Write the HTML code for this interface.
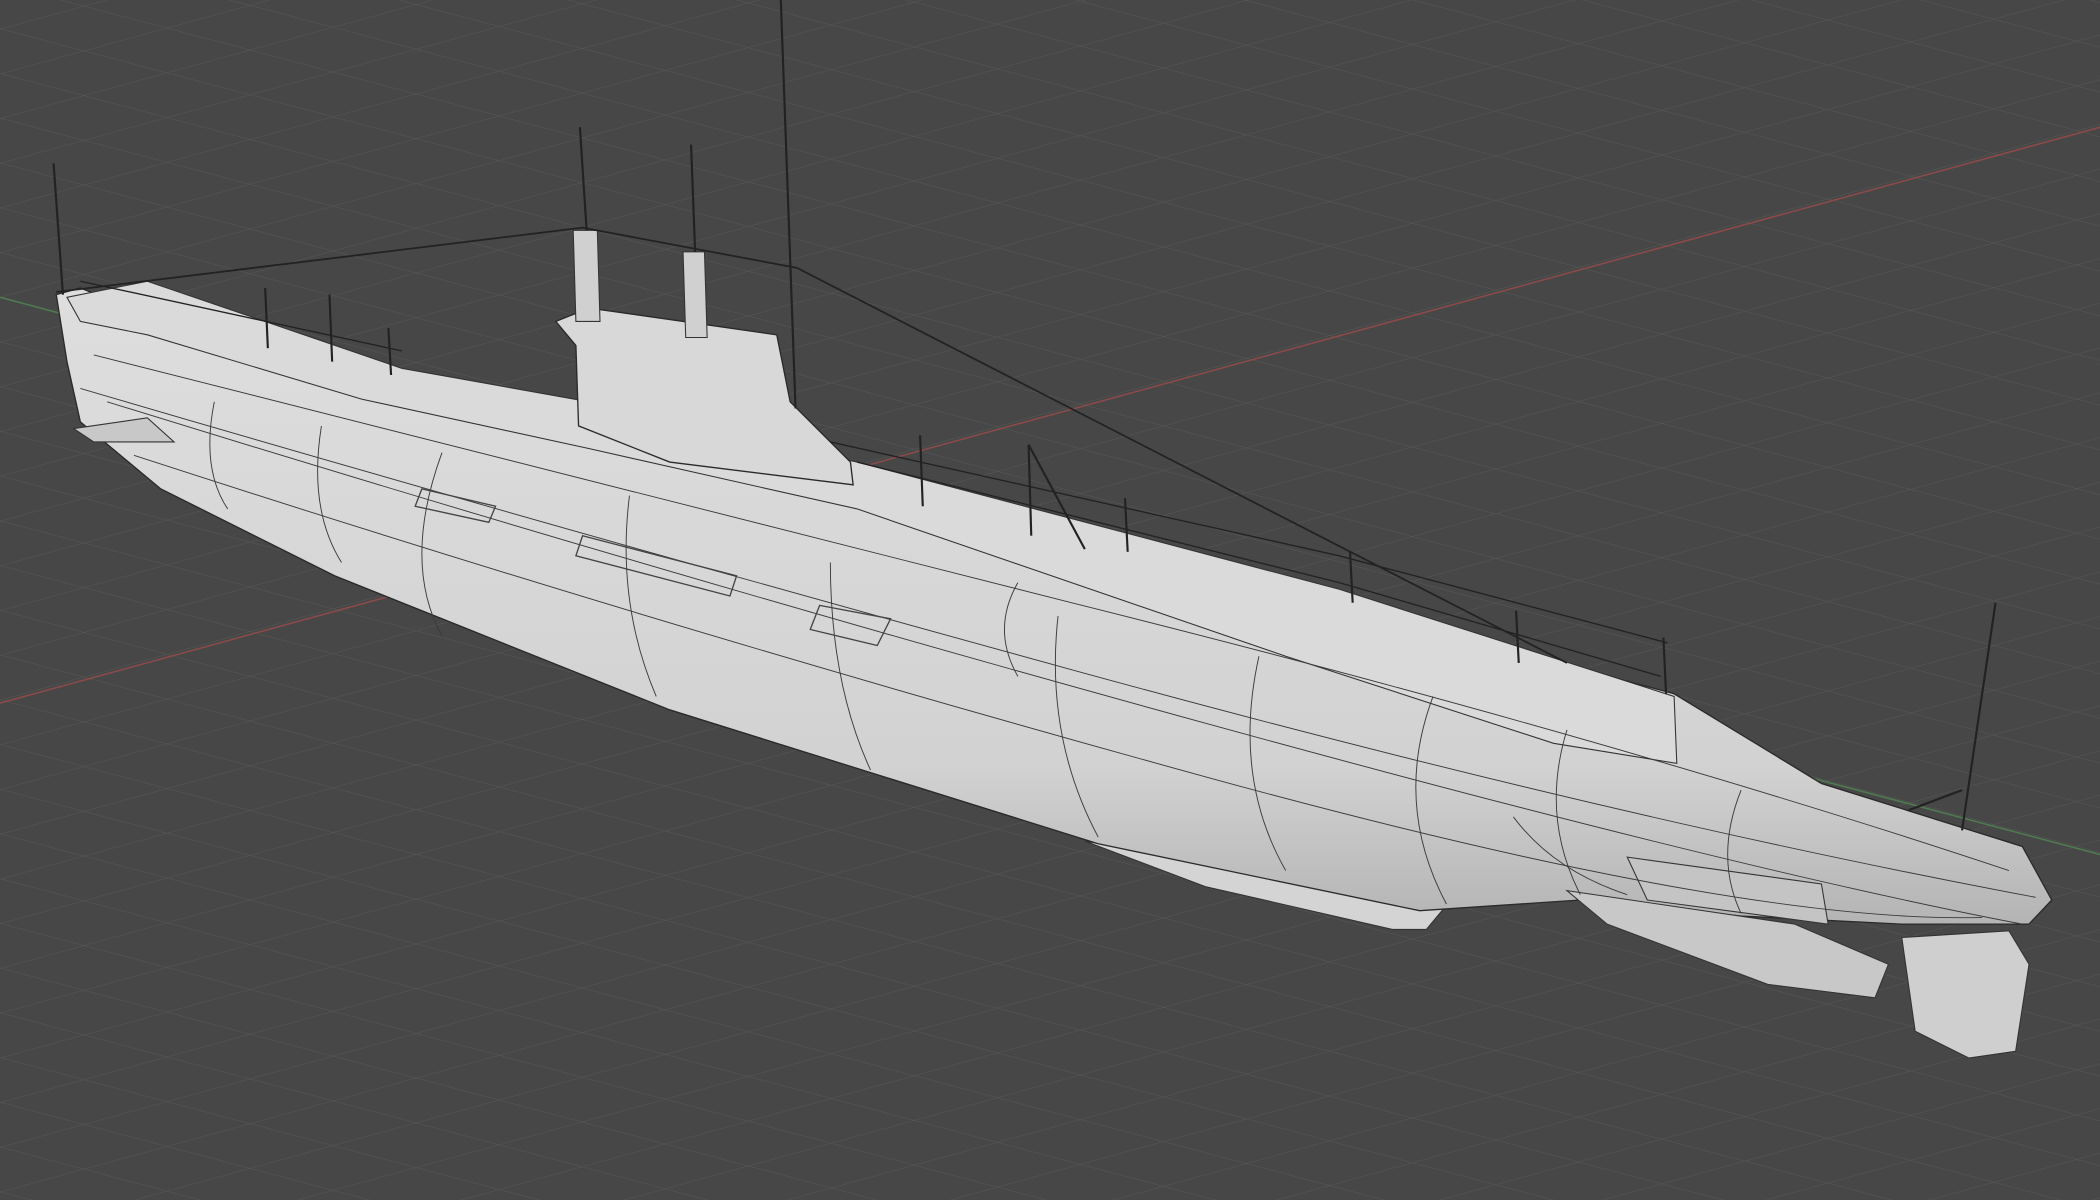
<!DOCTYPE html>
<html><head><meta charset="utf-8"><style>html,body{margin:0;padding:0;background:#474747;overflow:hidden}svg{display:block}</style></head>
<body>
<svg width="2100" height="1200" viewBox="0 0 1568 896" xmlns="http://www.w3.org/2000/svg">
<defs>
<pattern id="g" width="100" height="100" patternUnits="userSpaceOnUse" patternTransform="matrix(0.62,0.164,0.62,-0.17,0,222)">
<path d="M0 0H100M0 0V100" stroke="#575757" stroke-width="2.2" fill="none"/>
</pattern>
<linearGradient id="h" x1="0" y1="0" x2="0" y2="1">
<stop offset="0" stop-color="#dedede"/><stop offset="0.75" stop-color="#d2d2d2"/><stop offset="1" stop-color="#b4b4b4"/>
</linearGradient>
</defs>
<rect width="1568" height="896" fill="#474747"/>
<rect width="1568" height="896" fill="url(#g)"/>
<line x1="0" y1="525" x2="1568" y2="95" stroke="#8a4a4a" stroke-width="1.2"/>
<line x1="0" y1="222" x2="1568" y2="638" stroke="#4f7a4f" stroke-width="1.2"/>
<polygon points="810,628 1080,676 1065,694 1040,694 900,662" fill="#d4d4d4" stroke="#333" stroke-width="0.8"/>
<polygon points="42,220 60,215 110,235 300,290 440,322 640,362 960,440 1250,518 1360,585 1510,632 1532,672 1515,690 1420,690 1300,684 1180,672 1060,680 820,630 500,530 250,430 120,365 60,315 50,270" fill="url(#h)" stroke="#2a2a2a" stroke-width="1"/>
<polygon points="50,222 110,210 300,275 440,300 640,345 1000,440 1250,520 1252,570 1160,555 960,490 640,380 440,335 270,298 110,250 60,240" fill="#dadada" stroke="#333" stroke-width="0.8"/>
<polygon points="415,240 440,230 580,250 590,300 635,345 637,362 500,345 432,318 430,258" fill="#d8d8d8" stroke="#2a2a2a" stroke-width="1"/>
<polygon points="428,172 446,172 448,240 430,240" fill="#d0d0d0" stroke="#333" stroke-width="0.8"/>
<polygon points="510,188 526,188 528,252 512,252" fill="#d0d0d0" stroke="#333" stroke-width="0.8"/>
<polygon points="1420,700 1500,695 1515,720 1505,785 1470,790 1430,770" fill="#cfcfcf" stroke="#333" stroke-width="0.8"/>
<polygon points="1170,665 1340,690 1410,720 1400,745 1320,735 1200,690" fill="#c8c8c8" stroke="#333" stroke-width="0.8"/>
<polygon points="1215,640 1360,660 1365,690 1230,672" fill="#c4c4c4" stroke="#333" stroke-width="0.8"/>
<polygon points="55,320 110,312 130,330 70,330" fill="#c8c8c8" stroke="#333" stroke-width="0.8"/>
<g stroke="#3a3a3a" stroke-width="0.7" fill="none">
<path d="M60,290 Q400,390 800,500 T1520,670"/>
<path d="M70,265 Q400,350 800,450 T1500,650"/>
<path d="M100,340 Q500,470 900,580 T1480,685"/>
<path d="M80,300 Q500,430 900,540 T1510,690"/>
<path d="M160,300 Q150,350 170,380"/><path d="M240,318 Q230,380 255,420"/><path d="M330,338 Q300,420 330,475"/>
<path d="M470,370 Q460,450 490,520"/><path d="M620,420 Q620,510 650,575"/><path d="M790,460 Q780,550 820,625"/>
<path d="M940,490 Q920,580 960,650"/><path d="M1070,520 Q1040,600 1080,675"/><path d="M1170,545 Q1150,610 1180,668"/>
<path d="M1300,590 Q1280,640 1300,682"/>
<path d="M1130,610 Q1160,650 1215,668"/>
<path d="M760,435 Q740,470 760,505"/>
</g>
<g fill="none" stroke="#444" stroke-width="1">
<path d="M315,365 L370,378 L365,390 L310,378Z M435,400 L550,430 L545,445 L430,415Z M612,452 L665,462 L655,482 L605,470Z"/>
</g>
<g stroke="#222" stroke-width="1.6" fill="none">
<line x1="40" y1="122" x2="47" y2="220"/>
<line x1="433" y1="95" x2="438" y2="172"/>
<line x1="516" y1="108" x2="519" y2="188"/>
<line x1="583" y1="0" x2="594" y2="305"/>
<line x1="1490" y1="450" x2="1465" y2="620"/>
<polyline points="42,218 435,170 595,200 1170,495" stroke-width="1.3"/>
<polyline points="60,210 300,262" stroke-width="1"/>
<polyline points="620,330 1000,415 1245,480" stroke-width="1"/>
<polyline points="640,345 1000,435 1240,505" stroke-width="1"/>
<line x1="687" y1="325" x2="689" y2="378"/><line x1="768" y1="332" x2="770" y2="400"/><line x1="840" y1="372" x2="842" y2="412"/>
<line x1="1008" y1="412" x2="1010" y2="450"/><line x1="1132" y1="456" x2="1134" y2="495"/><line x1="1242" y1="476" x2="1244" y2="518"/>
<line x1="198" y1="215" x2="200" y2="260"/><line x1="246" y1="220" x2="248" y2="270"/><line x1="290" y1="245" x2="292" y2="280"/>
<line x1="768" y1="332" x2="810" y2="410"/><line x1="1465" y1="590" x2="1425" y2="605"/>
</g>
</svg>
</body></html>
